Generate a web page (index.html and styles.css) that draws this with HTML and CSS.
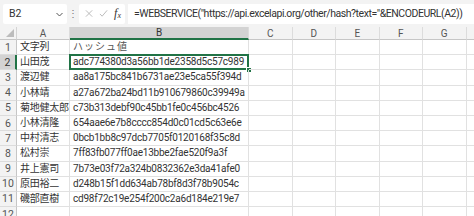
FILE: index.html
```html
<!DOCTYPE html>
<html lang="ja">
<head>
  <meta charset="UTF-8" />
  <title>WEBSERVICE hash</title>
  <link rel="stylesheet" href="styles.css">
</head>
<body>

  <div class="formula-bar">
    <div class="name-box">
      <span>B2</span>
      <svg class="chevron" width="7" height="5" viewBox="0 0 7 5"><path d="M0.5 1 L3.5 4 L6.5 1" fill="none" stroke="#555" stroke-width="1"/></svg>
    </div>
    <div class="grip">⋮</div>
    <div class="fn-box">
      <svg width="9" height="9" viewBox="0 0 9 9"><path d="M1 1 L8 8 M8 1 L1 8" stroke="#b4b4b4" stroke-width="1"/></svg>
      <svg width="10" height="9" viewBox="0 0 10 9"><path d="M1 5 L3.5 7.5 L9 1" fill="none" stroke="#b4b4b4" stroke-width="1"/></svg>
      <span class="fx">f<sub>x</sub></span>
    </div>
    <div class="formula">=WEBSERVICE("https://api.excelapi.org/other/hash?text="&amp;ENCODEURL(A2))</div>
  </div>

  <div class="sheet">
    <div class="corner"><span class="tri"></span></div>
    <div class="col-head">A</div>
    <div class="col-head active">B</div>
    <div class="col-head">C</div>
    <div class="col-head">D</div>
    <div class="col-head">E</div>
    <div class="col-head">F</div>
    <div class="col-head">G</div>
    <div class="col-head"></div>
  </div>

  <script>
    var rows = [
      ["文字列", "ハッシュ値"],
      ["山田茂", "adc774380d3a56bb1de2358d5c57c989"],
      ["渡辺健", "aa8a175bc841b6731ae23e5ca55f394d"],
      ["小林靖", "a27a672ba24bd11b910679860c39949a"],
      ["菊地健太郎", "c73b313debf90c45bb1fe0c456bc4526"],
      ["小林清隆", "654aae6e7b8cccc854d0c01cd5c63e6e"],
      ["中村清志", "0bcb1bb8c97dcb7705f0120168f35c8d"],
      ["松村崇", "7ff83fb077ff0ae13bbe2fae520f9a3f"],
      ["井上憲司", "7b73e03f72a324b0832362e3da41afe0"],
      ["原田裕二", "d248b15f1dd634ab78bf8d3f78b9054c"],
      ["磯部直樹", "cd98f72c19e254f200c2a6d184e219e7"],
      ["", ""]
    ];
    var sheet = document.querySelector('.sheet');
    rows.forEach(function (r, i) {
      var head = document.createElement('div');
      head.className = 'row-head' + (i === 1 ? ' active' : '');
      head.textContent = i + 1;
      sheet.appendChild(head);
      for (var c = 0; c < 8; c++) {
        var cell = document.createElement('div');
        cell.className = 'cell';
        if (c < 2) cell.textContent = r[c];
        if (i === 0 && c === 1) cell.classList.add('kana');
        if (i === 1 && c === 1) cell.classList.add('selected');
        sheet.appendChild(cell);
      }
    });
  </script>

</body>
</html>
```

FILE: styles.css
```css
body {
  margin: 0;
  width: 474px;
  height: 216px;
  overflow: hidden;
  background: #fff;
  font-family: Roboto, "Noto Sans CJK JP", sans-serif;
  color: #222;
}

/* Formula bar */
.formula-bar {
  display: flex;
  align-items: center;
  height: 27px;
  padding: 0 0 0 3px;
  background: #f3f3f3;
  box-sizing: border-box;
}

.name-box {
  display: flex;
  align-items: center;
  justify-content: space-between;
  width: 64px;
  height: 20px;
  padding: 0 4px 0 6px;
  box-sizing: border-box;
  background: #fff;
  border-radius: 2px;
  font-size: 10.5px;
  color: #333;
}

.chevron {
  margin-top: 1px;
}

.grip {
  width: 12px;
  text-align: center;
  font-size: 10px;
  color: #777;
}

.fn-box {
  display: flex;
  align-items: center;
  gap: 6px;
  width: 46px;
  height: 20px;
  padding: 0 4px 0 6px;
  box-sizing: border-box;
  background: #fff;
  border-radius: 2px;
}

.fx {
  font-family: "Liberation Serif", serif;
  font-style: italic;
  font-size: 12px;
  color: #333;
  line-height: 1;
}

.fx sub {
  font-size: 8px;
  vertical-align: -1px;
}

.formula {
  flex: 1;
  height: 20px;
  margin-left: 3px;
  padding-left: 6px;
  background: #fff;
  font-size: 10.5px;
  letter-spacing: -0.45px;
  line-height: 20px;
  color: #333;
  white-space: nowrap;
  overflow: hidden;
}

/* Sheet grid */
.sheet {
  display: grid;
  grid-template-columns: 17px 53px 179px repeat(5, 43.5px) 10px;
  grid-template-rows: 13px;
  grid-auto-rows: 15.2px;
}

.corner,
.col-head,
.row-head {
  background: #f3f3f3;
  color: #555;
  font-size: 10px;
  display: flex;
  align-items: center;
  justify-content: center;
  box-sizing: border-box;
}

.corner {
  position: relative;
  border-right: 1px solid #d4d4d4;
  border-bottom: 1px solid #c6c6c6;
}

.tri {
  position: absolute;
  right: 2px;
  bottom: 2px;
  width: 0;
  height: 0;
  border-left: 8px solid transparent;
  border-bottom: 8px solid #bcbcbc;
}

.col-head {
  border-right: 1px solid #dcdcdc;
  border-bottom: 1px solid #c6c6c6;
}

.col-head.active {
  background: #d3d3d3;
  color: #333;
  border-bottom: 2px solid #217346;
}

.row-head {
  border-right: 1px solid #c6c6c6;
  border-bottom: 1px solid #dcdcdc;
  font-size: 10.5px;
}

.row-head.active {
  background: #d3d3d3;
  color: #333;
  border-right: 2px solid #217346;
}

.cell {
  position: relative;
  border-right: 1px solid #e1e1e1;
  border-bottom: 1px solid #e1e1e1;
  box-sizing: border-box;
  padding-left: 3px;
  font-size: 10px;
  line-height: 14px;
  letter-spacing: -0.22px;
  white-space: nowrap;
  overflow: hidden;
  color: #333;
}

.cell.kana {
  letter-spacing: 1px;
  color: #555;
}

.cell.selected {
  overflow: visible;
}

.cell.selected::before {
  content: "";
  position: absolute;
  left: -1px;
  top: -1px;
  right: -1px;
  bottom: -1px;
  border: 2px solid #217346;
}

.cell.selected::after {
  content: "";
  position: absolute;
  right: -4px;
  bottom: -4px;
  width: 4px;
  height: 4px;
  background: #217346;
  border: 1px solid #fff;
}
```
